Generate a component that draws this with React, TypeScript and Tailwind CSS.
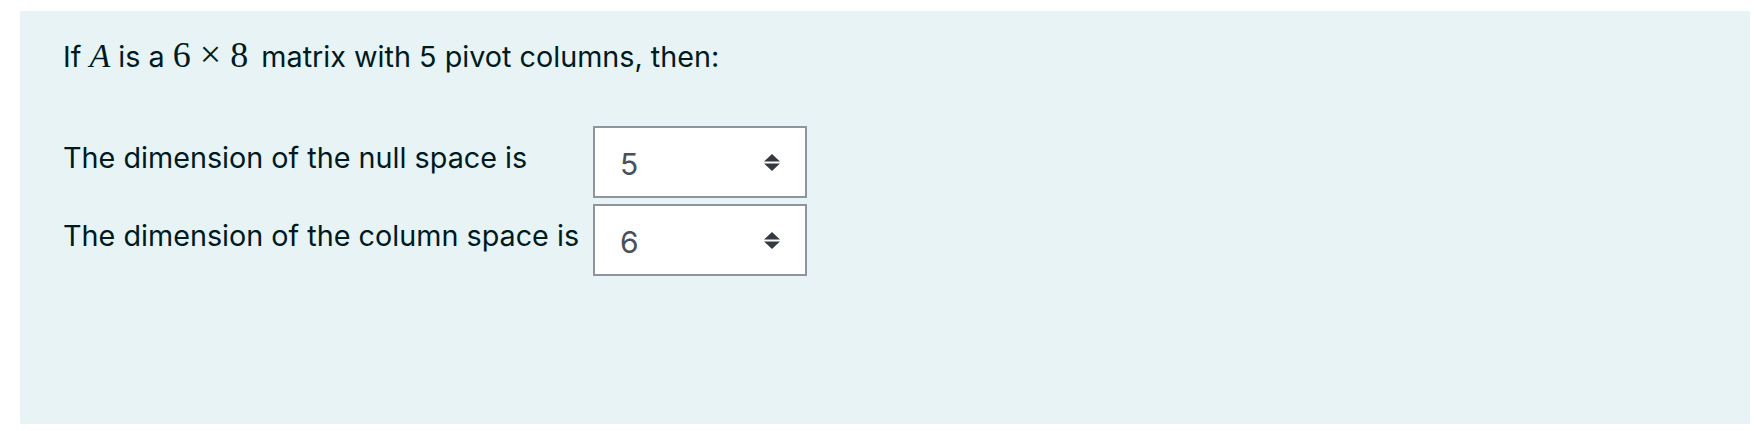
import React from 'react';

const font = { fontFamily: 'Inter, "Noto Sans", sans-serif' };
const mathFont = { fontFamily: '"Liberation Serif", "DejaVu Serif", serif' };

function SelectArrows() {
  return (
    <svg width="16" height="17" viewBox="0 0 16 17" className="shrink-0">
      <polygon points="8,0 16,7.5 0,7.5" fill="#343a40" />
      <polygon points="0,9.5 16,9.5 8,17" fill="#343a40" />
    </svg>
  );
}

function Select({ value }: { value: string }) {
  return (
    <div className="flex h-[72px] w-[214px] items-center justify-between border-2 border-[#8f959e] bg-white pl-[25px] pr-[25px]">
      <span className="pt-[4px] text-[30px] text-[#495057]">{value}</span>
      <SelectArrows />
    </div>
  );
}

export default function App() {
  const rows = [
    { label: 'The dimension of the null space is', value: '5' },
    { label: 'The dimension of the column space is', value: '6' },
  ];

  return (
    <div className="min-h-screen bg-white pl-[20px] pr-[4px] pt-[11px]" style={font}>
      <div className="h-[413px] bg-[#e7f3f5] pl-[43px] pt-[24px] text-[#001a1e]">
        <p className="text-[28.75px] leading-[42px]">
          If{' '}
          <span className="text-[34px] italic leading-none" style={mathFont}>
            A
          </span>{' '}
          is a{' '}
          <span className="pr-[5px] text-[36px] leading-none" style={mathFont}>
            6<span className="mx-[9px] text-[38px] leading-none">×</span>8
          </span>{' '}
          matrix with 5 pivot columns, then:
        </p>

        <div className="mt-[48px] grid grid-cols-[auto_auto] justify-start gap-x-[14px] gap-y-[6px]">
          {rows.map((r) => (
            <React.Fragment key={r.label}>
              <div className="pt-[11px] text-[28.75px] leading-[42px]">{r.label}</div>
              <Select value={r.value} />
            </React.Fragment>
          ))}
        </div>
      </div>
    </div>
  );
}
